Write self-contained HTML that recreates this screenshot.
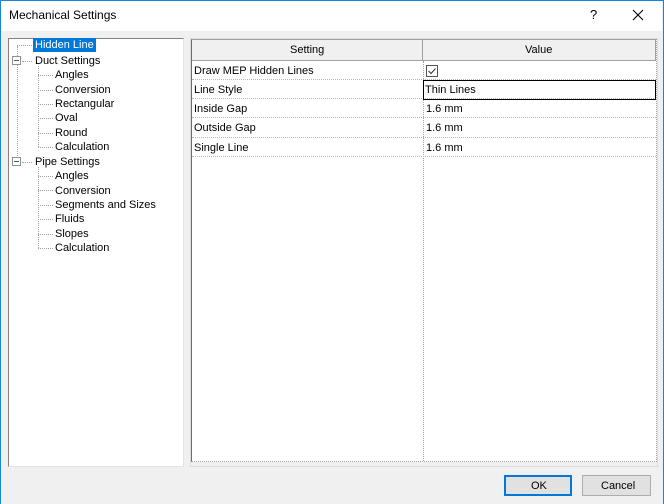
<!DOCTYPE html>
<html><head><style>
*{margin:0;padding:0;box-sizing:border-box}
body{width:664px;height:504px;background:#f0f0f0;font-family:"Liberation Sans",Tahoma,sans-serif;font-size:11px;color:#000;position:relative;overflow:hidden}
.a{position:absolute}
.t{position:absolute;white-space:nowrap;line-height:13px}
.dh{position:absolute;border-top:1px dotted #a0a0a0;height:0}
.dv{position:absolute;border-left:1px dotted #a0a0a0;width:0}
.minus{position:absolute;width:9px;height:9px;border:1px solid #919191;background:#fff}
.minus:after{content:"";position:absolute;left:1px;top:3px;width:5px;height:1px;background:#3a5a9a}
.row{position:absolute;left:192px;width:464px;height:19px;border-bottom:1px dotted #b8b8b8}
.tr .t{margin-top:1px}
.g{margin-top:1px}
</style></head><body>
<div class="a" style="left:0;top:0;width:664px;height:504px;border:1px solid #1883d7;border-bottom:none"></div>
<div class="a" style="left:1px;top:1px;width:661px;height:30px;background:#fff"></div>
<div class="t" style="left:9px;top:9px;font-size:12px">Mechanical Settings</div>
<div class="t" style="left:590px;top:8px;font-size:13px">?</div>
<svg class="a" style="left:632px;top:9px" width="12" height="12"><path d="M1 1L11 11M11 1L1 11" stroke="#000" stroke-width="1.1"/></svg>

<!-- tree -->
<div class="a" style="left:8px;top:38px;width:176px;height:429px;background:#fff;border:1px solid #e3e3e3;border-left:1px solid #828282;border-top:1px solid #828282"></div>
<div class="tr">
<div class="dv" style="left:17px;top:46px;height:116px"></div>
<div class="dh" style="left:17px;top:45px;width:15px"></div>
<div class="a" style="left:33px;top:38px;width:63px;height:14px;background:#0078d7"></div>
<div class="t" style="left:35px;top:38px;color:#fff">Hidden Line</div>
<div class="dh" style="left:22px;top:61px;width:10px"></div>
<div class="minus" style="left:12px;top:56px"></div>
<div class="t" style="left:35px;top:54px">Duct Settings</div>
<div class="dv" style="left:38px;top:66px;height:81px"></div>
<div class="dh" style="left:38px;top:75px;width:15px"></div><div class="t" style="left:55px;top:68px">Angles</div>
<div class="dh" style="left:38px;top:90px;width:15px"></div><div class="t" style="left:55px;top:83px">Conversion</div>
<div class="dh" style="left:38px;top:104px;width:15px"></div><div class="t" style="left:55px;top:97px">Rectangular</div>
<div class="dh" style="left:38px;top:118px;width:15px"></div><div class="t" style="left:55px;top:111px">Oval</div>
<div class="dh" style="left:38px;top:133px;width:15px"></div><div class="t" style="left:55px;top:126px">Round</div>
<div class="dh" style="left:38px;top:147px;width:15px"></div><div class="t" style="left:55px;top:140px">Calculation</div>
<div class="dh" style="left:22px;top:162px;width:10px"></div>
<div class="minus" style="left:12px;top:157px"></div>
<div class="t" style="left:35px;top:155px">Pipe Settings</div>
<div class="dv" style="left:38px;top:167px;height:81px"></div>
<div class="dh" style="left:38px;top:176px;width:15px"></div><div class="t" style="left:55px;top:169px">Angles</div>
<div class="dh" style="left:38px;top:190px;width:15px"></div><div class="t" style="left:55px;top:184px">Conversion</div>
<div class="dh" style="left:38px;top:205px;width:15px"></div><div class="t" style="left:55px;top:198px">Segments and Sizes</div>
<div class="dh" style="left:38px;top:219px;width:15px"></div><div class="t" style="left:55px;top:212px">Fluids</div>
<div class="dh" style="left:38px;top:234px;width:15px"></div><div class="t" style="left:55px;top:227px">Slopes</div>
<div class="dh" style="left:38px;top:248px;width:15px"></div><div class="t" style="left:55px;top:241px">Calculation</div>
</div>

<!-- grid -->
<div class="a" style="left:190px;top:38px;width:468px;height:429px;border:1px solid #dcdcdc"></div>
<div class="a" style="left:191px;top:39px;width:466px;height:423px;background:#fff;border-left:1px solid #6e6e6e;border-top:1px solid #a0a0a0;border-right:1px dotted #a0a0a0;border-bottom:1px dotted #a0a0a0"></div>
<div class="a" style="left:192px;top:40px;width:464px;height:21px;background:#f0f0f0;border-bottom:1px solid #a0a0a0"></div>
<div class="a" style="left:422px;top:40px;width:1px;height:21px;background:#a0a0a0"></div>
<div class="a" style="left:655px;top:40px;width:1px;height:21px;background:#a0a0a0"></div>
<div class="t" style="left:290px;top:44px">Setting</div>
<div class="t" style="left:525px;top:44px">Value</div>
<div class="dv" style="left:423px;top:61px;height:400px"></div>
<div class="row" style="top:61px"></div>
<div class="row" style="top:80px"></div>
<div class="row" style="top:99px"></div>
<div class="row" style="top:119px"></div>
<div class="row" style="top:138px"></div>
<div class="t" style="left:194px;top:65px">Draw MEP Hidden Lines</div>
<div class="a" style="left:426px;top:65px;width:12px;height:12px;border:1px solid #555;background:#fff"></div>
<svg class="a" style="left:427px;top:66px" width="10" height="10"><path d="M1.5 5L4 7.5L8.5 2.5" stroke="#333" fill="none" stroke-width="1"/></svg>
<div class="t" style="left:194px;top:84px">Line Style</div>
<div class="a" style="left:423px;top:80px;width:233px;height:20px;border:1px solid #000"></div>
<div class="t" style="left:425px;top:84px">Thin Lines</div>
<div class="t" style="left:194px;top:103px">Inside Gap</div><div class="t" style="left:426px;top:103px">1.6 mm</div>
<div class="t" style="left:194px;top:122px">Outside Gap</div><div class="t" style="left:426px;top:122px">1.6 mm</div>
<div class="t" style="left:194px;top:142px">Single Line</div><div class="t" style="left:426px;top:142px">1.6 mm</div>

<!-- buttons -->
<div class="a" style="left:504px;top:475px;width:68px;height:21px;background:#e1e1e1;border:1px solid #0078d7;box-shadow:inset 0 0 0 1px #0078d7"></div>
<div class="t" style="left:531px;top:480px">OK</div>
<div class="a" style="left:582px;top:475px;width:69px;height:21px;background:#e1e1e1;border:1px solid #adadad"></div>
<div class="t" style="left:601px;top:480px">Cancel</div>
</body></html>
